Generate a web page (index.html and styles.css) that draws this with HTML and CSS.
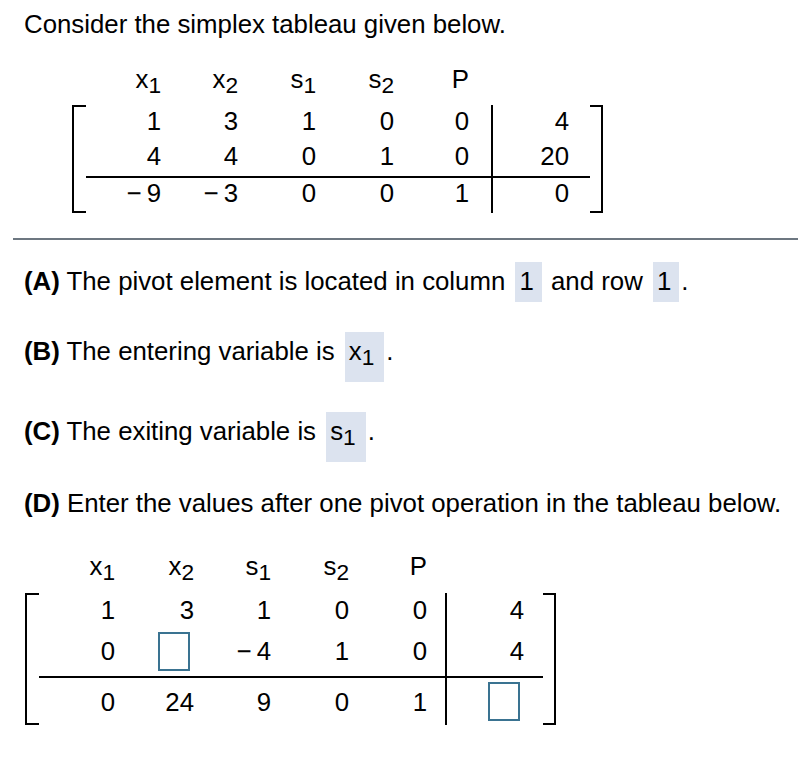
FILE: index.html
```html
<!DOCTYPE html>
<html>
<head>
<meta charset="utf-8">
<title>Simplex tableau</title>
<link rel="stylesheet" href="styles.css">
</head>
<body>
<div class="page">
  <p class="text title">Consider the simplex tableau given below.</p>

  <div class="tableau t1">
    <div class="head">
      <span class="hc">x<sub>1</sub></span>
      <span class="hc">x<sub>2</sub></span>
      <span class="hc">s<sub>1</sub></span>
      <span class="hc">s<sub>2</sub></span>
      <span class="hc c5">P</span>
    </div>
    <div class="mat">
      <div class="br br-l"></div>
      <div class="grid">
        <div class="c r1">1</div><div class="c r1">3</div><div class="c r1">1</div><div class="c r1">0</div><div class="c r1 c5">0</div><div class="c r1 c6">4</div>
        <div class="c r2">4</div><div class="c r2">4</div><div class="c r2">0</div><div class="c r2">1</div><div class="c r2 c5">0</div><div class="c r2 c6">20</div>
        <div class="c r3">&minus;&thinsp;9</div><div class="c r3">&minus;&thinsp;3</div><div class="c r3">0</div><div class="c r3">0</div><div class="c r3 c5">1</div><div class="c r3 c6">0</div>
      </div>
      <div class="br br-r"></div>
    </div>
  </div>

  <hr class="sep">

  <p class="text qa"><b>(A)</b> The pivot element is located in column <span class="ans">1</span> and row <span class="ans">1</span>.</p>
  <p class="text qb"><b>(B)</b> The entering variable is <span class="ans tall">x<sub>1</sub></span>.</p>
  <p class="text qc"><b>(C)</b> The exiting variable is <span class="ans tall">s<sub>1</sub></span>.</p>
  <p class="text qd"><b>(D)</b> Enter the values after one pivot operation in the tableau below.</p>

  <div class="tableau t2">
    <div class="head">
      <span class="hc">x<sub>1</sub></span>
      <span class="hc">x<sub>2</sub></span>
      <span class="hc">s<sub>1</sub></span>
      <span class="hc">s<sub>2</sub></span>
      <span class="hc c5">P</span>
    </div>
    <div class="mat">
      <div class="br br-l"></div>
      <div class="grid">
        <div class="c r1">1</div><div class="c r1">3</div><div class="c r1">1</div><div class="c r1">0</div><div class="c r1 c5">0</div><div class="c r1 c6">4</div>
        <div class="c r2">0</div><div class="c r2"><span class="inp"></span></div><div class="c r2">&minus;&thinsp;4</div><div class="c r2">1</div><div class="c r2 c5">0</div><div class="c r2 c6">4</div>
        <div class="c r3">0</div><div class="c r3">24</div><div class="c r3">9</div><div class="c r3">0</div><div class="c r3 c5">1</div><div class="c r3 c6"><span class="inp"></span></div>
      </div>
      <div class="br br-r"></div>
    </div>
  </div>
</div>
</body>
</html>
```

FILE: styles.css
```css
html, body {
  margin: 0;
  padding: 0;
  background: #ffffff;
}

body {
  font-family: "Liberation Sans", Arial, Helvetica, sans-serif;
  font-size: 25.8px;
  color: #000000;
}

.page {
  padding: 10px 0 0 13px;
}

.text {
  margin: 0 0 0 11px;
  line-height: 28px;
}

sub {
  font-size: 0.88em;
  vertical-align: -5px;
  line-height: 0;
}

/* ---------- tableau ---------- */
.tableau {
  display: flex;
  flex-direction: column;
  align-items: flex-start;
}

.t1 {
  margin: 27px 0 0 59px;
}

.t2 {
  margin: 35px 0 0 12px;
}

.head {
  display: grid;
  padding-left: 14px;
  line-height: 28px;
  height: 28px;
}

.hc {
  text-align: right;
}

.mat {
  display: flex;
  align-items: stretch;
}

.t1 .mat {
  margin-top: 12px;
}

.t2 .mat {
  margin-top: 13px;
}

.br {
  box-sizing: border-box;
  border: 2px solid #000000;
}

.br-l {
  width: 14px;
  border-right: none;
}

.br-r {
  width: 13px;
  border-left: none;
}

.grid {
  display: grid;
}

.t1 .head,
.t1 .grid {
  grid-template-columns: 75px 77px 78px 78px 97px 99px;
}

.t1 .grid {
  grid-template-rows: 31px 42px 35px;
}

.t2 .head,
.t2 .grid {
  grid-template-columns: 76px 79px 77px 78px 96px 98px;
}

.t2 .grid {
  grid-template-rows: 33px 52px 47px;
}

.c {
  box-sizing: border-box;
  display: flex;
  align-items: center;
  justify-content: flex-end;
  line-height: 28px;
  white-space: nowrap;
}

.r2 {
  border-bottom: 2px solid #000000;
}

.t1 .r3 {
  padding-bottom: 6px;
}

.t1 .c5 {
  padding-right: 22px;
}

.t2 .c5 {
  padding-right: 18px;
}

.c6 {
  border-left: 2px solid #000000;
}

.t1 .c6 {
  padding-right: 21px;
}

.t2 .c6 {
  padding-right: 19px;
}

.inp {
  display: block;
  box-sizing: border-box;
  width: 32px;
  height: 39px;
  margin-right: 4px;
  border: 2px solid #3a7391;
  background: #ffffff;
}

/* ---------- separator ---------- */
.sep {
  margin: 25px 0 0 0;
  border: 0;
  height: 2px;
  background: #6d7781;
}

/* ---------- questions ---------- */
.qa {
  margin-top: 22px;
}

.qb,
.qc {
  margin-top: 30px;
}

.qd {
  margin-top: 27px;
}

.ans {
  display: inline-block;
  background: #dce3ef;
  padding: 5px 8px 7px 4px;
  line-height: 28px;
  margin: 0 2px 0 3px;
}

.ans.tall {
  padding: 5px 10px 17px 4px;
}
```
